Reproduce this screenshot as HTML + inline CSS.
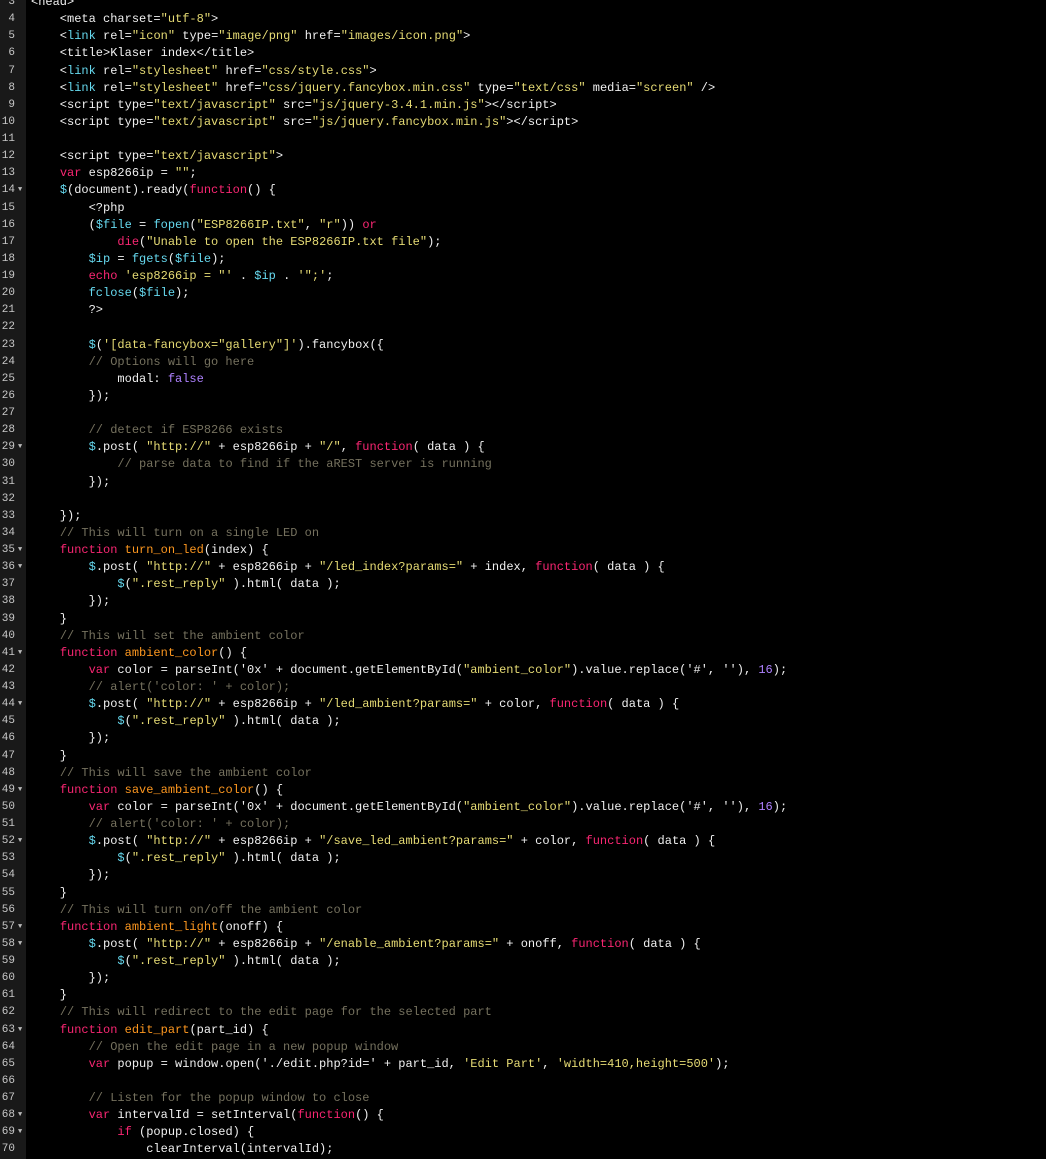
<!DOCTYPE html>
<html><head><meta charset="utf-8"><style>
html,body{margin:0;padding:0;background:#000;width:1046px;height:1159px;overflow:hidden}
.g{position:absolute;left:0;top:0;width:26px;height:1159px;background:#191919}
.wrap{position:absolute;left:0;top:-6px;width:1046px;font-family:"Liberation Mono","DejaVu Sans Mono",monospace;font-size:12px;line-height:17.14px;color:#f0f0f0}
.l{height:17.14px;position:relative}
.n{position:absolute;left:0;width:15px;text-align:right;color:#c8c8c8;font-size:11px}
.a{position:absolute;left:18px;color:#bbb;font-size:7px}
.t{position:absolute;left:31px;white-space:pre}
.k{color:#f92672}.s{color:#e6db74}.c{color:#66d9ef}.f{color:#fd971f}.p{color:#ae81ff}.m{color:#75715e}
</style></head><body><div class="g"></div><div class="wrap">
<div class="l"><span class="n">3</span><span class="t">&lt;head&gt;</span></div>
<div class="l"><span class="n">4</span><span class="t">    &lt;meta charset=<span class="s">"utf-8"</span>&gt;</span></div>
<div class="l"><span class="n">5</span><span class="t">    &lt;<span class="c">link</span> rel=<span class="s">"icon"</span> type=<span class="s">"image/png"</span> href=<span class="s">"images/icon.png"</span>&gt;</span></div>
<div class="l"><span class="n">6</span><span class="t">    &lt;title&gt;Klaser index&lt;/title&gt;</span></div>
<div class="l"><span class="n">7</span><span class="t">    &lt;<span class="c">link</span> rel=<span class="s">"stylesheet"</span> href=<span class="s">"css/style.css"</span>&gt;</span></div>
<div class="l"><span class="n">8</span><span class="t">    &lt;<span class="c">link</span> rel=<span class="s">"stylesheet"</span> href=<span class="s">"css/jquery.fancybox.min.css"</span> type=<span class="s">"text/css"</span> media=<span class="s">"screen"</span> /&gt;</span></div>
<div class="l"><span class="n">9</span><span class="t">    &lt;script type=<span class="s">"text/javascript"</span> src=<span class="s">"js/jquery-3.4.1.min.js"</span>&gt;&lt;/script&gt;</span></div>
<div class="l"><span class="n">10</span><span class="t">    &lt;script type=<span class="s">"text/javascript"</span> src=<span class="s">"js/jquery.fancybox.min.js"</span>&gt;&lt;/script&gt;</span></div>
<div class="l"><span class="n">11</span></div>
<div class="l"><span class="n">12</span><span class="t">    &lt;script type=<span class="s">"text/javascript"</span>&gt;</span></div>
<div class="l"><span class="n">13</span><span class="t">    <span class="k">var</span> esp8266ip = <span class="s">""</span>;</span></div>
<div class="l"><span class="n">14</span><span class="a">▼</span><span class="t">    <span class="c">$</span>(document).ready(<span class="k">function</span>() {</span></div>
<div class="l"><span class="n">15</span><span class="t">        &lt;?php</span></div>
<div class="l"><span class="n">16</span><span class="t">        (<span class="c">$file</span> = <span class="c">fopen</span>(<span class="s">"ESP8266IP.txt"</span>, <span class="s">"r"</span>)) <span class="k">or</span></span></div>
<div class="l"><span class="n">17</span><span class="t">            <span class="k">die</span>(<span class="s">"Unable to open the ESP8266IP.txt file"</span>);</span></div>
<div class="l"><span class="n">18</span><span class="t">        <span class="c">$ip</span> = <span class="c">fgets</span>(<span class="c">$file</span>);</span></div>
<div class="l"><span class="n">19</span><span class="t">        <span class="k">echo</span> <span class="s">'esp8266ip = "'</span> . <span class="c">$ip</span> . <span class="s">'";'</span>;</span></div>
<div class="l"><span class="n">20</span><span class="t">        <span class="c">fclose</span>(<span class="c">$file</span>);</span></div>
<div class="l"><span class="n">21</span><span class="t">        ?&gt;</span></div>
<div class="l"><span class="n">22</span></div>
<div class="l"><span class="n">23</span><span class="t">        <span class="c">$</span>(<span class="s">'[data-fancybox="gallery"]'</span>).fancybox({</span></div>
<div class="l"><span class="n">24</span><span class="t">        <span class="m">// Options will go here</span></span></div>
<div class="l"><span class="n">25</span><span class="t">            modal: <span class="p">false</span></span></div>
<div class="l"><span class="n">26</span><span class="t">        });</span></div>
<div class="l"><span class="n">27</span></div>
<div class="l"><span class="n">28</span><span class="t">        <span class="m">// detect if ESP8266 exists</span></span></div>
<div class="l"><span class="n">29</span><span class="a">▼</span><span class="t">        <span class="c">$</span>.post( <span class="s">"http://"</span> + esp8266ip + <span class="s">"/"</span>, <span class="k">function</span>( data ) {</span></div>
<div class="l"><span class="n">30</span><span class="t">            <span class="m">// parse data to find if the aREST server is running</span></span></div>
<div class="l"><span class="n">31</span><span class="t">        });</span></div>
<div class="l"><span class="n">32</span></div>
<div class="l"><span class="n">33</span><span class="t">    });</span></div>
<div class="l"><span class="n">34</span><span class="t">    <span class="m">// This will turn on a single LED on</span></span></div>
<div class="l"><span class="n">35</span><span class="a">▼</span><span class="t">    <span class="k">function</span> <span class="f">turn_on_led</span>(index) {</span></div>
<div class="l"><span class="n">36</span><span class="a">▼</span><span class="t">        <span class="c">$</span>.post( <span class="s">"http://"</span> + esp8266ip + <span class="s">"/led_index?params="</span> + index, <span class="k">function</span>( data ) {</span></div>
<div class="l"><span class="n">37</span><span class="t">            <span class="c">$</span>(<span class="s">".rest_reply"</span> ).html( data );</span></div>
<div class="l"><span class="n">38</span><span class="t">        });</span></div>
<div class="l"><span class="n">39</span><span class="t">    }</span></div>
<div class="l"><span class="n">40</span><span class="t">    <span class="m">// This will set the ambient color</span></span></div>
<div class="l"><span class="n">41</span><span class="a">▼</span><span class="t">    <span class="k">function</span> <span class="f">ambient_color</span>() {</span></div>
<div class="l"><span class="n">42</span><span class="t">        <span class="k">var</span> color = parseInt('0x' + document.getElementById(<span class="s">"ambient_color"</span>).value.replace('#', ''), <span class="p">16</span>);</span></div>
<div class="l"><span class="n">43</span><span class="t">        <span class="m">// alert('color: ' + color);</span></span></div>
<div class="l"><span class="n">44</span><span class="a">▼</span><span class="t">        <span class="c">$</span>.post( <span class="s">"http://"</span> + esp8266ip + <span class="s">"/led_ambient?params="</span> + color, <span class="k">function</span>( data ) {</span></div>
<div class="l"><span class="n">45</span><span class="t">            <span class="c">$</span>(<span class="s">".rest_reply"</span> ).html( data );</span></div>
<div class="l"><span class="n">46</span><span class="t">        });</span></div>
<div class="l"><span class="n">47</span><span class="t">    }</span></div>
<div class="l"><span class="n">48</span><span class="t">    <span class="m">// This will save the ambient color</span></span></div>
<div class="l"><span class="n">49</span><span class="a">▼</span><span class="t">    <span class="k">function</span> <span class="f">save_ambient_color</span>() {</span></div>
<div class="l"><span class="n">50</span><span class="t">        <span class="k">var</span> color = parseInt('0x' + document.getElementById(<span class="s">"ambient_color"</span>).value.replace('#', ''), <span class="p">16</span>);</span></div>
<div class="l"><span class="n">51</span><span class="t">        <span class="m">// alert('color: ' + color);</span></span></div>
<div class="l"><span class="n">52</span><span class="a">▼</span><span class="t">        <span class="c">$</span>.post( <span class="s">"http://"</span> + esp8266ip + <span class="s">"/save_led_ambient?params="</span> + color, <span class="k">function</span>( data ) {</span></div>
<div class="l"><span class="n">53</span><span class="t">            <span class="c">$</span>(<span class="s">".rest_reply"</span> ).html( data );</span></div>
<div class="l"><span class="n">54</span><span class="t">        });</span></div>
<div class="l"><span class="n">55</span><span class="t">    }</span></div>
<div class="l"><span class="n">56</span><span class="t">    <span class="m">// This will turn on/off the ambient color</span></span></div>
<div class="l"><span class="n">57</span><span class="a">▼</span><span class="t">    <span class="k">function</span> <span class="f">ambient_light</span>(onoff) {</span></div>
<div class="l"><span class="n">58</span><span class="a">▼</span><span class="t">        <span class="c">$</span>.post( <span class="s">"http://"</span> + esp8266ip + <span class="s">"/enable_ambient?params="</span> + onoff, <span class="k">function</span>( data ) {</span></div>
<div class="l"><span class="n">59</span><span class="t">            <span class="c">$</span>(<span class="s">".rest_reply"</span> ).html( data );</span></div>
<div class="l"><span class="n">60</span><span class="t">        });</span></div>
<div class="l"><span class="n">61</span><span class="t">    }</span></div>
<div class="l"><span class="n">62</span><span class="t">    <span class="m">// This will redirect to the edit page for the selected part</span></span></div>
<div class="l"><span class="n">63</span><span class="a">▼</span><span class="t">    <span class="k">function</span> <span class="f">edit_part</span>(part_id) {</span></div>
<div class="l"><span class="n">64</span><span class="t">        <span class="m">// Open the edit page in a new popup window</span></span></div>
<div class="l"><span class="n">65</span><span class="t">        <span class="k">var</span> popup = window.open('./edit.php?id=' + part_id, <span class="s">'Edit Part'</span>, <span class="s">'width=410,height=500'</span>);</span></div>
<div class="l"><span class="n">66</span></div>
<div class="l"><span class="n">67</span><span class="t">        <span class="m">// Listen for the popup window to close</span></span></div>
<div class="l"><span class="n">68</span><span class="a">▼</span><span class="t">        <span class="k">var</span> intervalId = setInterval(<span class="k">function</span>() {</span></div>
<div class="l"><span class="n">69</span><span class="a">▼</span><span class="t">            <span class="k">if</span> (popup.closed) {</span></div>
<div class="l"><span class="n">70</span><span class="t">                clearInterval(intervalId);</span></div>
</div></body></html>
